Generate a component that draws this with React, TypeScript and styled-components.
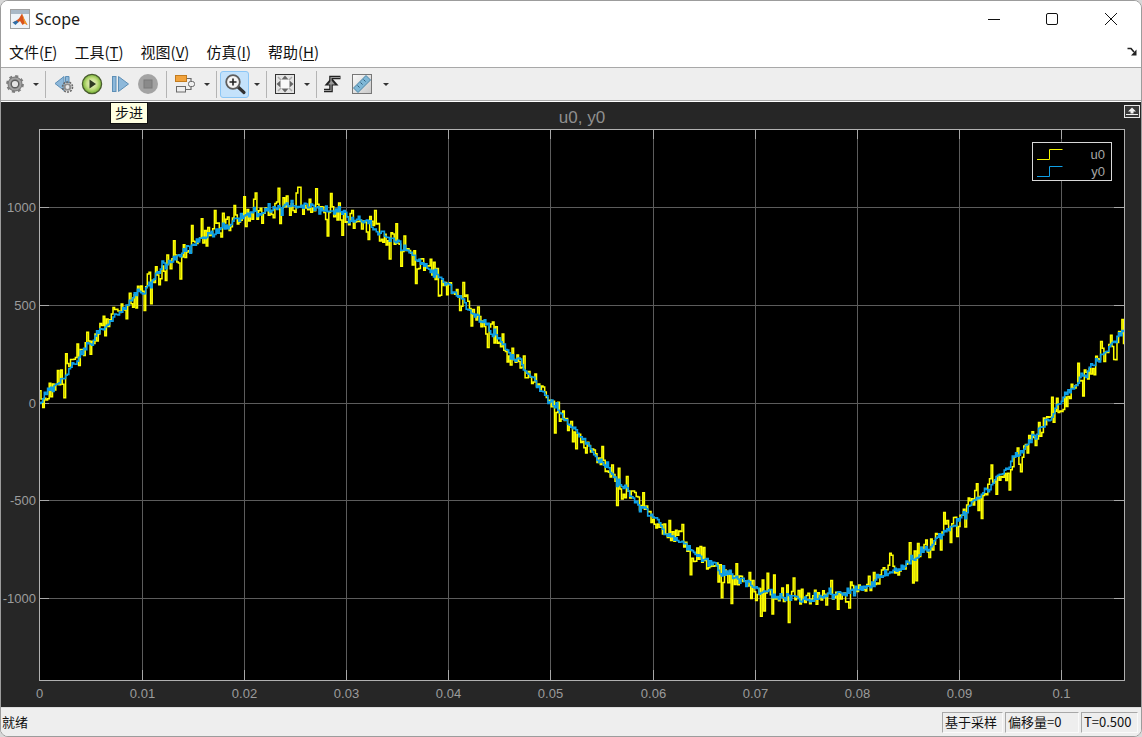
import styled, { createGlobalStyle } from 'styled-components';

const GlobalStyle = createGlobalStyle`
	html, body {
		margin: 0;
		padding: 0;
		background: #d8d8d8;
	}
	* {
		box-sizing: border-box;
	}
`;

const Window = styled.div`
	position: relative;
	display: flex;
	flex-direction: column;
	width: 1142px;
	height: 737px;
	overflow: hidden;
	background: #fff;
	border: 1px solid #9c9c9c;
	border-radius: 8px;
	font-family: 'Noto Sans CJK SC', 'Noto Sans', sans-serif;
`;

const TitleBar = styled.header`
	display: flex;
	align-items: center;
	height: 37px;
	padding: 0 0 2px 9px;
	background: #fff;
`;

const TitleText = styled.span`
	margin-left: 5px;
	font-family: 'Noto Sans', sans-serif;
	font-size: 16px;
	color: #1a1a1a;
`;

const WindowControls = styled.div`
	display: flex;
	margin-left: auto;
	margin-right: 1px;
`;

const ControlButton = styled.div`
	display: flex;
	align-items: center;
	justify-content: center;
	width: 58.5px;
	height: 35px;
`;

const MenuBar = styled.nav`
	display: flex;
	align-items: center;
	height: 29px;
	padding: 0 0 2px 8px;
	background: #fff;
`;

const MenuItem = styled.span`
	margin-right: 17px;
	font-size: 15px;
	line-height: 20px;
	color: #111;
	& > u {
		text-underline-offset: 2px;
	}
`;

const MenuCorner = styled.div`
	display: flex;
	margin-left: auto;
	margin-right: 4px;
`;

const Toolbar = styled.div`
	display: flex;
	align-items: center;
	height: 34px;
	background: #eeeeee;
	border-top: 1px solid #a8a8a8;
	border-bottom: 1px solid #a8a8a8;
`;

const ToolGroup = styled.div<{ $width: number; $last?: boolean; $inset?: number }>`
	display: flex;
	align-items: center;
	justify-content: center;
	width: ${(p) => p.$width}px;
	height: 27px;
	padding-right: ${(p) => p.$inset ?? 0}px;
	border-right: ${(p) => (p.$last ? 'none' : '1px solid #b4b4b4')};
`;

const ToolButton = styled.div<{ $active?: boolean; $wide?: number }>`
	display: flex;
	align-items: center;
	justify-content: center;
	width: ${(p) => p.$wide ?? 28}px;
	height: 27px;
	border-radius: 3px;
	background: ${(p) => (p.$active ? '#c4e2fb' : 'transparent')};
	border: ${(p) => (p.$active ? '1px solid #8cc6f5' : 'none')};
`;

const Caret = styled.span`
	display: block;
	width: 0;
	height: 0;
	margin: 0 3px 0 5px;
	border-left: 3.5px solid transparent;
	border-right: 3.5px solid transparent;
	border-top: 3.5px solid #333;
`;

const Tooltip = styled.div`
	position: absolute;
	left: 109px;
	top: 101px;
	z-index: 3;
	width: 38px;
	height: 22px;
	background: #ffffe1;
	border: 1px solid #111;
	font-size: 14px;
	line-height: 19px;
	text-align: center;
	color: #111;
`;

const ScopePanel = styled.main`
	position: relative;
	flex: 1;
	margin-top: 1px;
	background: #262626;
`;

const PlotSvg = styled.svg`
	display: block;
	width: 1140px;
	height: 605px;
`;

const TickLabel = styled.text`
	font-family: 'Liberation Sans', Arial, sans-serif;
	font-size: 13px;
	fill: #9c9c9c;
`;

const PlotTitle = styled.text`
	font-family: 'Liberation Sans', Arial, sans-serif;
	font-size: 17px;
	fill: #8f8f8f;
`;

const UndockButton = styled.div`
	position: absolute;
	right: 1px;
	top: 3px;
	display: flex;
	align-items: center;
	justify-content: center;
	width: 16px;
	height: 13px;
	border: 1px solid #e8e8e8;
	background: #3a3a3a;
`;

const Legend = styled.div`
	position: absolute;
	left: 1031px;
	top: 40px;
	display: flex;
	flex-direction: column;
	justify-content: center;
	width: 80px;
	height: 39px;
	padding: 3px 6px 0 4px;
	background: #000;
	border: 1px solid #d8d8d8;
`;

const LegendRow = styled.div`
	display: flex;
	align-items: center;
	justify-content: space-between;
	height: 18px;
	font-family: 'Liberation Sans', Arial, sans-serif;
	font-size: 13px;
	color: #a6a6a6;
`;

const StatusBar = styled.footer`
	display: flex;
	align-items: center;
	height: 29px;
	padding: 0 3px 0 1px;
	background: #eeeeee;
	border-top: 1px solid #dcdcdc;
`;

const StatusText = styled.span`
	font-size: 13px;
	line-height: 18px;
	margin-bottom: 1px;
	color: #111;
`;

const StatusCell = styled.div<{ $width: number }>`
	width: ${(p) => p.$width}px;
	height: 21px;
	margin-left: 2px;
	padding-left: 2px;
	border-top: 1px solid #a8a8a8;
	border-left: 1px solid #a8a8a8;
	border-right: 1px solid #fafafa;
	border-bottom: 1px solid #fafafa;
	font-size: 13px;
	line-height: 18px;
	white-space: nowrap;
	color: #111;
`;

const StatusSpacer = styled.div`
	flex: 1;
`;

// plot geometry, in panel coordinates (panel starts at x=1, y=102 on the page)
const LEFT = 38;
const RIGHT = 1123;
const TOP = 27;
const BOTTOM = 578;
const PX_PER_SEC = 10220;
const ZERO_Y = 300.5;
const PX_PER_UNIT = 0.1958;
const T_MAX = (RIGHT - LEFT) / PX_PER_SEC;

const xOf = (t: number) => LEFT + 0.4 + t * PX_PER_SEC;
const yOf = (v: number) => ZERO_Y - v * PX_PER_UNIT;

const X_TICKS = ['0', '0.01', '0.02', '0.03', '0.04', '0.05', '0.06', '0.07', '0.08', '0.09', '0.1'];
const Y_TICKS = [1000, 500, 0, -500, -1000];

const buildTraces = () => {
	let seed = 20240611;
	const rand = () => {
		seed = (seed + 0x6d2b79f5) | 0;
		let r = Math.imul(seed ^ (seed >>> 15), 1 | seed);
		r = (r + Math.imul(r ^ (r >>> 7), 61 | r)) ^ r;
		return ((r ^ (r >>> 14)) >>> 0) / 4294967296;
	};
	const gauss = () =>
		Math.sqrt(-2 * Math.log(rand() + 1e-9)) * Math.cos(2 * Math.PI * rand());

	const dt = 0.00016;
	let u = '';
	let y = '';
	let filtered = 0;
	for (let t = 0; t < T_MAX; t += dt) {
		const clean = 1000 * Math.sin(2 * Math.PI * 10 * t);
		const spike = rand() < 0.2 ? 3 : 1;
		const noise = Math.max(-130, Math.min(100, gauss() * 30 * spike));
		const noisy = clean + noise;
		filtered = clean * 0.72 + (filtered + noise * 0.15) * 0.28 + gauss() * 13;
		const x0 = xOf(t).toFixed(1);
		const x1 = xOf(Math.min(t + dt, T_MAX)).toFixed(1);
		u += `${u ? 'L' : 'M'}${x0} ${yOf(noisy).toFixed(1)}L${x1} ${yOf(noisy).toFixed(1)}`;
		y += `${y ? 'L' : 'M'}${x0} ${yOf(filtered).toFixed(1)}L${x1} ${yOf(filtered).toFixed(1)}`;
	}
	return { u, y };
};

const traces = buildTraces();

const MatlabLogo = () => (
	<svg width='20' height='20' viewBox='0 0 20 20'>
		<rect x='0.5' y='0.5' width='19' height='19' fill='#eef3f8' stroke='#a0a0a0' />
		<rect x='1' y='1' width='18' height='4' fill='#a9b8c6' />
		<path d='M2.5 13.5l4-2 2.5-2 3-5 2.5 6 3 5.5-3-1.5-2 1.5-2.5-4-2 1.5z' fill='#d9541e' />
		<path d='M2.5 13.5l4-2 2 1.5-3 3z' fill='#2f6ea8' />
		<path d='M12 4.500l2.500 6 3 5.500-3-1.500z' fill='#f09a2c' />
	</svg>
);

const MinimizeIcon = () => (
	<svg width='14' height='14' viewBox='0 0 14 14'>
		<path d='M1 7.500h12' stroke='#111' strokeWidth='1' />
	</svg>
);

const MaximizeIcon = () => (
	<svg width='14' height='14' viewBox='0 0 14 14'>
		<rect x='1.5' y='1.5' width='11' height='11' rx='1.5' fill='none' stroke='#111' />
	</svg>
);

const CloseIcon = () => (
	<svg width='14' height='14' viewBox='0 0 14 14'>
		<path d='M1 1l12 12M13 1L1 13' stroke='#111' strokeWidth='1' />
	</svg>
);

const DockArrowIcon = () => (
	<svg width='10' height='10' viewBox='0 0 10 10'>
		<path d='M0.500 1.500h3.500l3 3.500' fill='none' stroke='#222' strokeWidth='1.6' />
		<path d='M9.500 2.500V8.500H4z' fill='#222' />
	</svg>
);

const GearIcon = () => (
	<svg width='20' height='20' viewBox='0 0 20 20'>
		<circle cx='10' cy='10' r='7.800' fill='none' stroke='#808080' strokeWidth='2.200' strokeDasharray='3.060 3.060' />
		<circle cx='10' cy='10' r='7' fill='#a0a0a0' stroke='#747474' />
		<circle cx='10' cy='10' r='3.800' fill='#e4e4e4' stroke='#5e5e5e' strokeWidth='1.400' />
	</svg>
);

const StepBackIcon = () => (
	<svg width='22' height='22' viewBox='0 0 22 22'>
		<path d='M11 3.500v14L2 10.500z' fill='#8db8da' stroke='#5d8fb6' />
		<path d='M12.500 3.500h3.500v6h-3.500z' fill='#8db8da' stroke='#5d8fb6' />
		<circle cx='14.500' cy='14' r='5' fill='none' stroke='#6a6a6a' strokeWidth='1.600' strokeDasharray='2 1.100' />
		<circle cx='14.500' cy='14' r='3.800' fill='#8f8f8f' />
		<circle cx='14.500' cy='14' r='1.900' fill='#e6e6e6' />
	</svg>
);

const PlayIcon = () => (
	<svg width='22' height='22' viewBox='0 0 22 22'>
		<defs>
			<radialGradient id='playFill' cx='50%' cy='48%' r='52%'>
				<stop offset='0%' stopColor='#f2f8dc' />
				<stop offset='55%' stopColor='#c4de84' />
				<stop offset='100%' stopColor='#6fb02c' />
			</radialGradient>
		</defs>
		<circle cx='11' cy='11' r='9.600' fill='url(#playFill)' stroke='#4a5c30' strokeWidth='1.300' />
		<path d='M8.500 6.500v9l6.500-4.500z' fill='#2f3a22' />
	</svg>
);

const StepForwardIcon = () => (
	<svg width='22' height='22' viewBox='0 0 22 22'>
		<rect x='3.5' y='3.5' width='3.5' height='15' fill='#8db8da' stroke='#5d8fb6' />
		<path d='M9.500 3.500v15l10-7.500z' fill='#8db8da' stroke='#5d8fb6' />
	</svg>
);

const StopIcon = () => (
	<svg width='22' height='22' viewBox='0 0 22 22'>
		<circle cx='11' cy='11' r='10' fill='#a3a3a3' />
		<rect x='7' y='7' width='8' height='8' fill='#8a8a8a' stroke='#7a7a7a' />
	</svg>
);

const HierarchyIcon = () => (
	<svg width='24' height='22' viewBox='0 0 24 22'>
		<path d='M14 5.500h4v4M13 16.500h5v-3' fill='none' stroke='#6a6a6a' strokeWidth='1.200' />
		<rect x='2.5' y='2.500' width='11' height='6' fill='#f2a33c' stroke='#c27c20' />
		<rect x='15.5' y='8.500' width='6' height='5' rx='2' fill='#eee' stroke='#6a6a6a' />
		<rect x='3.5' y='13.500' width='9' height='5.500' fill='#eee' stroke='#6a6a6a' />
	</svg>
);

const ZoomIcon = () => (
	<svg width='24' height='24' viewBox='0 0 24 24'>
		<path d='M14.500 14.500l6.500 6' stroke='#333' strokeWidth='3.200' strokeLinecap='round' />
		<circle cx='10' cy='10' r='6.800' fill='#f4f4f4' stroke='#5e5e5e' strokeWidth='1.800' />
		<path d='M6.500 10h7M10 6.500v7' stroke='#222' strokeWidth='1.600' />
	</svg>
);

const FitIcon = () => (
	<svg width='22' height='22' viewBox='0 0 22 22'>
		<rect x='1.5' y='1.5' width='19' height='19' fill='#e4e4e4' stroke='#333' />
		<circle cx='11' cy='11' r='5.500' fill='#f8f8f8' />
		<path d='M11 2.500l3.500 4H7.500zM11 19.500l3.500-4H7.500zM2.500 11l4-3.500v7zM19.500 11l-4-3.500v7z' fill='#666' />
		<path d='M4 4l3 3M18 4l-3 3M4 18l3-3M18 18l-3-3' stroke='#aaa' strokeWidth='1.500' />
	</svg>
);

const SignalIcon = () => (
	<svg width='22' height='22' viewBox='0 0 22 22'>
		<path d='M3 17.500h7V4.500h9.500' fill='none' stroke='#222' strokeWidth='3.600' />
		<path d='M10.500 4.500l7 8h-14z' fill='#222' />
		<path d='M3 17.500h7V4.500h9' fill='none' stroke='#9a9a9a' strokeWidth='1.200' />
		<path d='M10.500 7.500l3.500 4h-7z' fill='#9a9a9a' />
	</svg>
);

const RulerIcon = () => (
	<svg width='22' height='22' viewBox='0 0 22 22'>
		<defs>
			<linearGradient id='rulerBack' x1='0' y1='0' x2='1' y2='1'>
				<stop offset='0%' stopColor='#fafafa' />
				<stop offset='100%' stopColor='#c8c8c8' />
			</linearGradient>
		</defs>
		<rect x='1.5' y='1.5' width='19' height='19' fill='url(#rulerBack)' stroke='#777' />
		<path d='M2.500 15L15 2.500l4.500 4.500L7 19.500z' fill='#7fb7d6' stroke='#4c86a6' />
		<path d='M6.500 12.500l2 2M9.500 9.500l2 2M12.500 6.500l2 2' stroke='#2f5f7c' />
	</svg>
);

const UndockIcon = () => (
	<svg width='12' height='9' viewBox='0 0 12 9'>
		<path d='M6 0.500l4 4H7.500v2h-3v-2H2z' fill='#f2f2f2' />
		<path d='M0 7.500h12' stroke='#f2f2f2' />
	</svg>
);

const StepSample = ({ color }: { color: string }) => (
	<svg width='26' height='12' viewBox='0 0 26 12'>
		<path d='M0 10.500h12.500V0.500h13' fill='none' stroke={color} strokeWidth='1' />
	</svg>
);

const ScopePlot = () => (
	<PlotSvg viewBox='0 0 1140 605'>
		<rect x={LEFT} y={TOP} width={RIGHT - LEFT} height={BOTTOM - TOP} fill='#000' />
		{X_TICKS.map((label, i) => {
			const x = Math.round(xOf(i * 0.01)) + 0.5;
			return (
				<g key={label}>
					<path d={`M${x} ${TOP}V${BOTTOM}`} stroke='#5c5c5c' />
					<path d={`M${x} ${TOP}v10M${x} ${BOTTOM}v-10`} stroke='#a8a8a8' />
					<TickLabel x={x} y={BOTTOM + 18} textAnchor='middle'>
						{label}
					</TickLabel>
				</g>
			);
		})}
		{Y_TICKS.map((value) => {
			const y = Math.round(yOf(value)) + 0.5;
			return (
				<g key={value}>
					<path d={`M${LEFT} ${y}H${RIGHT}`} stroke='#5c5c5c' />
					<path d={`M${LEFT} ${y}h10M${RIGHT} ${y}h-10`} stroke='#a8a8a8' />
					<TickLabel x={LEFT - 3} y={y + 4} textAnchor='end'>
						{value}
					</TickLabel>
				</g>
			);
		})}
		<path d={traces.u} fill='none' stroke='#ffff00' strokeWidth='1.500' />
		<path d={traces.y} fill='none' stroke='#0f9fe6' strokeWidth='1.600' />
		<rect
			x={LEFT + 0.5}
			y={TOP + 0.5}
			width={RIGHT - LEFT}
			height={BOTTOM - TOP}
			fill='none'
			stroke='#b0b0b0'
		/>
		<PlotTitle x={581} y={21} textAnchor='middle'>
			u0, y0
		</PlotTitle>
	</PlotSvg>
);

const App = () => (
	<>
		<GlobalStyle />
		<Window>
			<TitleBar>
				<MatlabLogo />
				<TitleText>Scope</TitleText>
				<WindowControls>
					<ControlButton>
						<MinimizeIcon />
					</ControlButton>
					<ControlButton>
						<MaximizeIcon />
					</ControlButton>
					<ControlButton>
						<CloseIcon />
					</ControlButton>
				</WindowControls>
			</TitleBar>
			<MenuBar>
				<MenuItem>文件(<u>F</u>)</MenuItem>
				<MenuItem>工具(<u>T</u>)</MenuItem>
				<MenuItem>视图(<u>V</u>)</MenuItem>
				<MenuItem>仿真(<u>I</u>)</MenuItem>
				<MenuItem>帮助(<u>H</u>)</MenuItem>
				<MenuCorner>
					<DockArrowIcon />
				</MenuCorner>
			</MenuBar>
			<Toolbar>
				<ToolGroup $width={45} $inset={3}>
					<ToolButton>
						<GearIcon />
					</ToolButton>
					<Caret />
				</ToolGroup>
				<ToolGroup $width={121}>
					<ToolButton>
						<StepBackIcon />
					</ToolButton>
					<ToolButton>
						<PlayIcon />
					</ToolButton>
					<ToolButton>
						<StepForwardIcon />
					</ToolButton>
					<ToolButton>
						<StopIcon />
					</ToolButton>
				</ToolGroup>
				<ToolGroup $width={50}>
					<ToolButton>
						<HierarchyIcon />
					</ToolButton>
					<Caret />
				</ToolGroup>
				<ToolGroup $width={50}>
					<ToolButton $active $wide={29}>
						<ZoomIcon />
					</ToolButton>
					<Caret />
				</ToolGroup>
				<ToolGroup $width={50}>
					<ToolButton>
						<FitIcon />
					</ToolButton>
					<Caret />
				</ToolGroup>
				<ToolGroup $width={76} $last>
					<ToolButton>
						<SignalIcon />
					</ToolButton>
					<ToolButton $wide={32}>
						<RulerIcon />
					</ToolButton>
					<Caret />
				</ToolGroup>
			</Toolbar>
			<Tooltip>步进</Tooltip>
			<ScopePanel>
				<ScopePlot />
				<UndockButton>
					<UndockIcon />
				</UndockButton>
				<Legend>
					<LegendRow>
						<StepSample color='#f4f400' />
						<span>u0</span>
					</LegendRow>
					<LegendRow>
						<StepSample color='#0f9fe6' />
						<span>y0</span>
					</LegendRow>
				</Legend>
			</ScopePanel>
			<StatusBar>
				<StatusText>就绪</StatusText>
				<StatusSpacer />
				<StatusCell $width={61}>基于采样</StatusCell>
				<StatusCell $width={74}>偏移量=0</StatusCell>
				<StatusCell $width={57}>T=0.500</StatusCell>
			</StatusBar>
		</Window>
	</>
);

export default App;
